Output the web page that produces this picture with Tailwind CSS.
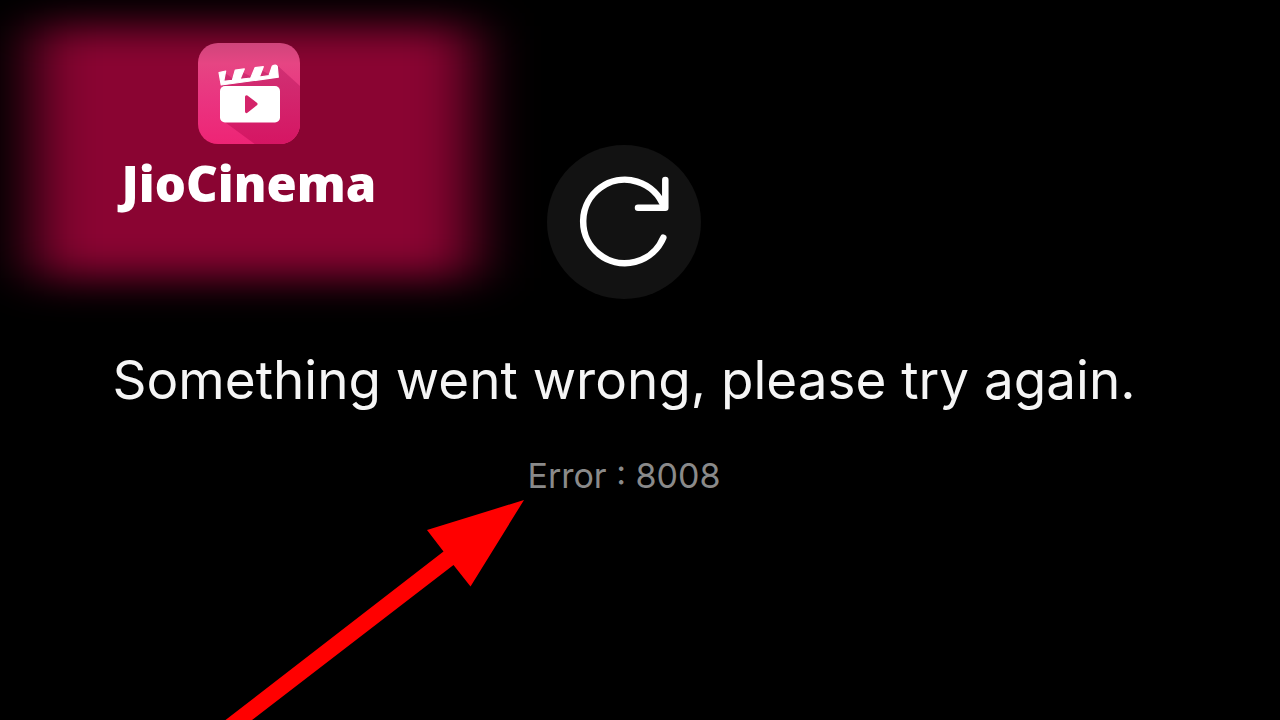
<!DOCTYPE html>
<html lang="en">
<head>
    <meta charset="UTF-8">
    <meta name="viewport" content="width=device-width, initial-scale=1.0">
    <title>JioCinema - Error 8008</title>
    <script src="https://cdn.jsdelivr.net/npm/@tailwindcss/browser@4"></script>
</head>
<body class="relative min-h-screen overflow-hidden bg-black text-white">
    <!-- Brand card, laid over the error screen -->
    <header class="absolute top-0 left-0 w-[498px] h-[310px] flex flex-col items-center pt-[43px]">
        <svg class="absolute top-0 left-0" width="580" height="360" viewBox="0 0 580 360" aria-hidden="true">
            <defs>
                <filter id="glow" x="-25%" y="-30%" width="150%" height="160%" color-interpolation-filters="sRGB">
                    <feGaussianBlur stdDeviation="30 19" />
                </filter>
            </defs>
            <rect x="34" y="26" width="438" height="252" fill="#8a0432" filter="url(#glow)" />
        </svg>

        <svg class="relative" width="102" height="102" viewBox="0 0 102 102" aria-hidden="true">
            <defs>
                <linearGradient id="tile" x1="0" y1="0" x2="0" y2="1">
                    <stop offset="0" stop-color="#cf457b" />
                    <stop offset="0.2" stop-color="#e64583" />
                    <stop offset="0.55" stop-color="#ea3480" />
                    <stop offset="1" stop-color="#ee2475" />
                </linearGradient>
                <linearGradient id="shade" x1="0" y1="0" x2="0" y2="1">
                    <stop offset="0" stop-color="#d03073" />
                    <stop offset="1" stop-color="#d61563" />
                </linearGradient>
                <clipPath id="round"><rect width="102" height="101" rx="20" /></clipPath>
            </defs>
            <g clip-path="url(#round)">
                <rect width="102" height="102" fill="url(#tile)" />
                <path d="M80 23L102 43V102H58L24 77V42L26 29L34 35L40 27L52 33L60 25L72 32Z" fill="url(#shade)" />
            </g>
            <path d="M21 29.5L27.7 28L25.7 38.3L34.3 37.3L37.3 27L46.3 25.9L42 36.3L52.7 35L57 24.7L65.3 23.7L61.3 34L71 32.7L74.3 23Q78 21 79.3 23.5L80.3 34.2L23.2 42Z" fill="#fff" stroke="#fff" stroke-width="1.2" stroke-linejoin="round" />
            <rect x="22" y="43" width="60" height="36.5" rx="5" fill="#fff" />
            <path d="M48.5 53.8L58 61L48.5 68.6Z" fill="#d4246a" stroke="#d4246a" stroke-width="3" stroke-linejoin="round" />
        </svg>

        <p class="relative mt-2 font-['Open_Sans',sans-serif] text-[49px] leading-[60px] font-extrabold">JioCinema</p>
    </header>

    <main class="flex flex-col items-center pt-[145px] pr-8 text-center font-[Inter,sans-serif]">
        <button type="button" aria-label="Try again" class="size-[154px] rounded-full bg-[#121212]">
            <svg viewBox="0 0 154 154" fill="none" stroke="#fff" stroke-width="6.5" stroke-linecap="round" stroke-linejoin="round" aria-hidden="true">
                <path d="M116.3 92.7A41.7 41.7 0 1 1 117 62" />
                <path d="M118.3 35V62.7H91" />
            </svg>
        </button>
        <h1 class="mt-12 text-[53px] leading-[66px] whitespace-nowrap text-[#f5f5f5]">Something went wrong, please try again.</h1>
        <p class="mt-9 text-[34px] leading-[54px] text-[#8a8a8a]">Error : 8008</p>
    </main>

    <!-- Pointer to the error code -->
    <svg class="absolute bottom-0 left-[225px]" width="300" height="220" viewBox="0 0 300 220" aria-hidden="true">
        <path d="M299 0L245.5 86.5L228.5 65L27 220H0.5L218.5 51.5L202 30Z" fill="#f00" />
    </svg>
</body>
</html>
